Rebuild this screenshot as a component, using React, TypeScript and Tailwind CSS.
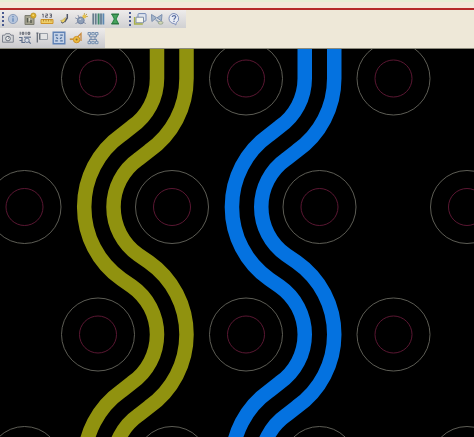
import type { ReactNode } from "react";

const OLIVE = "#90920f";
const BLUE = "#0472e0";

function Tool({ label, children }: { label: string; children: ReactNode }) {
  return (
    <button type="button" aria-label={label} title={label} className="flex h-4 w-4 shrink-0 items-center justify-center">
      <svg viewBox="0 0 14 14" className="h-3.5 w-3.5" fill="none" aria-hidden="true">
        {children}
      </svg>
    </button>
  );
}

function Grip() {
  return <span aria-hidden="true" className="h-3.5 border-l-2 border-dotted border-[#4a5a90]" />;
}

function InfoIcon() {
  return (
    <>
      <circle cx="7" cy="7" r="4.6" fill="#b5c5dc" stroke="#8fa0bd" />
      <path d="M7 6.3v3.4M7 4.1v1.2" stroke="#5c82b6" strokeWidth="1.2" />
    </>
  );
}

function BoardIcon() {
  return (
    <>
      <path d="M2 3.5h9v9H2z" fill="#a3a18d" stroke="#7c7d70" />
      <path d="M4.5 6v4.5M8 8v3" stroke="#565b50" strokeWidth="1.4" />
      <path d="M6.3 6v3" stroke="#e2e0d0" />
      <circle cx="10.4" cy="3.6" r="2.6" fill="#dcae2c" stroke="#b58e22" strokeWidth=".7" />
      <path d="M9.4 3.2h1.6" stroke="#fff0a0" />
    </>
  );
}

function RulerIcon() {
  return (
    <>
      <path d="M2 2.5 3.2 2v3.5M5.5 2h2v1.7h-2v1.6h2.2M9.5 2h2v3.3h-2M10 3.6h1.5" stroke="#5d606e" strokeWidth=".9" />
      <path d="M1 7.5h12v4H1z" fill="#eed06a" stroke="#cf9428" />
      <path d="M3.5 7.5v2M6 7.5v2M8.5 7.5v2M11 7.5v2" stroke="#ad7923" strokeWidth=".8" />
    </>
  );
}

function BrushIcon() {
  return (
    <>
      <path d="M10.3 2v4L7.5 10" stroke="#4f5566" strokeWidth="1.5" />
      <path d="m3.5 8.6 2-.6 3-2.5-.8 4-2 1.5z" fill="#ecd268" stroke="#b79a3a" strokeWidth=".5" />
      <path d="m4 10 2 1.2 2-2" stroke="#5d6068" />
    </>
  );
}

function SparkIcon() {
  return (
    <>
      <circle cx="6.8" cy="8.4" r="3.4" fill="#8f9fb6" stroke="#6f80a0" />
      <path d="M1.2 5.8 3.5 7M3.8 3l1.2 2M1.5 11.5 4 10.4M10 10.6l1.8 1" stroke="#8792a8" />
      <circle cx="10.4" cy="4.4" r="2" fill="#e6c250" />
      <path d="M10.4 1.2v1.4M12.3 4.5h1.4M11.8 3l1.2-1" stroke="#b79a44" />
      <path d="M5.4 7.6 7.2 7" stroke="#dce3ed" />
    </>
  );
}

function LayersIcon() {
  return (
    <>
      <path d="M1 1.5h12.5v11H1z" fill="#c2ccd1" />
      <path d="M2.2 1.5v11M4.8 1.5v11" stroke="#5a6f80" strokeWidth="1.3" />
      <path d="M7.6 1.5v11" stroke="#3e8a68" strokeWidth="1.7" />
      <path d="M10 1.5v11" stroke="#3a5a78" strokeWidth="1.2" />
      <path d="M12.4 1.5v11" stroke="#5c89b4" strokeWidth="1.6" />
    </>
  );
}

function HourglassIcon() {
  return (
    <>
      <path d="M4.2 2.5h6L8 7l2.2 4.5h-6L6.4 7z" fill="#48a35d" stroke="#2f8a4a" strokeWidth="1.2" />
      <path d="M3.4 2.3h7.6M3.4 11.7h7.6" stroke="#2b7a42" strokeWidth="1.4" />
    </>
  );
}

function WindowsIcon() {
  return (
    <>
      <rect x="5" y="1.6" width="8" height="7.6" rx="1" fill="#dfe4ee" stroke="#7288b4" />
      <path d="M3 5.2h7.5v5.6H3z" fill="#f6f5ec" stroke="#7f8fa6" />
      <path d="M1.6 5v7h8.2" stroke="#a8b04a" strokeWidth="1.4" />
    </>
  );
}

function NetworkIcon() {
  return (
    <>
      <path d="m1.5 2.5 5 3.2-4.6 3.8zM12 2.5 7 5.8l4.4 3z" fill="#a9b8cc" stroke="#7c90b0" />
      <path d="m5.5 7.5 3.8 3" stroke="#8fa0b4" strokeWidth="1.4" />
      <ellipse cx="10.6" cy="10.8" rx="2.4" ry="1.4" fill="#d4dab6" stroke="#8f9c88" strokeWidth=".8" />
    </>
  );
}

function HelpIcon() {
  return (
    <>
      <path d="M7 1.5a5 5 0 1 0 0 10l1.8 1.5.4-2.2A5 5 0 0 0 7 1.5Z" fill="#e9ecf4" stroke="#7f8fba" />
      <path d="M5.3 5c0-2 3.6-1.8 3.4 0C8.6 6.3 7 6.1 7 7.7M7 8.8v1.1" stroke="#5a6da2" strokeWidth="1.2" />
    </>
  );
}

function CameraIcon() {
  return (
    <>
      <path d="M1.5 4.2h2.2l1-1.5h4.2l1 1.5h2.4v7H1.5z" fill="#d3d5d8" stroke="#7d828d" />
      <circle cx="7" cy="7.6" r="2.3" fill="#eceded" stroke="#656c79" />
      <path d="m6.8 7.8 1.4-1.3" stroke="#656c79" />
    </>
  );
}

function SignalIcon() {
  return (
    <>
      <path d="M2.2 .8v3M4.2 1.3h1.6v2H4.2zM8 .8v3M10 1.3h1.8v2H10z" stroke="#4d5260" strokeWidth=".9" />
      <path d="M1 6.5h3M1.5 9.5h3M4 6v5.5h3" stroke="#60708c" strokeWidth="1.2" />
      <path d="M6 6.2h7" stroke="#60708c" strokeWidth="1.1" />
      <circle cx="9" cy="9.3" r="2.2" fill="#d9dee6" stroke="#6b7c99" />
      <path d="m10.8 10.8 2 1.8" stroke="#60708c" strokeWidth="1.2" />
    </>
  );
}

function FlagIcon() {
  return (
    <>
      <path d="M4.5 2.5h8v6h-8z" fill="#e3e4e5" stroke="#9aa0a9" />
      <path d="M2.3 2v9.5M4.8 2.5v6M1.4 2.2h2" stroke="#5f6672" strokeWidth="1.2" />
    </>
  );
}

function GridIcon() {
  return (
    <>
      <path d="M1.2 1.2h11.6v11.6H1.2z" fill="#c3d1e6" stroke="#5f82b6" strokeWidth="1.4" />
      <path d="M3.2 4.2h2.6M8.2 4.2h2.6M3.2 9.8h2.6M8.2 9.8h2.6M4.2 6.5 6 7.8M9.8 6.5 8 7.8" stroke="#4c6e9e" strokeWidth="1.3" />
    </>
  );
}

function KeyIcon() {
  return (
    <>
      <path d="m8 6.5 4-4v7.5" stroke="#c98a3c" strokeWidth="1.3" />
      <path d="M.8 8.2h5" stroke="#c9923a" strokeWidth="1.7" />
      <circle cx="7.6" cy="8.6" r="3.2" fill="#eebb3c" stroke="#cc9128" />
      <circle cx="7.6" cy="8.5" r="1" fill="#876d3b" />
    </>
  );
}

function NodesIcon() {
  return (
    <>
      <path d="M2 1.5h2.6v2.4H2zM5.8 1.5h2.4v2.4H5.8zM9.4 1.5H12v2.4H9.4zM2 10.3h2.6v2.4H2zM5.8 10.3h2.4v2.4H5.8zM9.4 10.3H12v2.4H9.4z" fill="#d4e0e8" stroke="#6e88aa" strokeWidth=".9" />
      <path d="M3.5 4v1.8h7V4M3.5 10.2V8.4h7v1.8M5 5.8v2.6M9 5.8v2.6" stroke="#7189ab" />
    </>
  );
}

const vias = [
  [98, 78.5], [246, 78.5], [393.5, 78.5],
  [24.5, 207], [172, 207], [319.5, 207], [467, 207],
  [98, 334.5], [246, 334.5], [393.5, 334.5],
  [24.5, 463], [172, 463], [319.5, 463], [467, 463],
];

function TracePair({ color, shift }: { color: string; shift: number }) {
  return (
    <g transform={`translate(${shift} 0)`} stroke={color} strokeWidth="14.5" fill="none">
      <path d="M157 40V78.5A59 59 0 0 1 131.8 126.8L121.5 134.9A88 88 0 0 0 84.2 207A88 88 0 0 0 121.5 279.1L131.8 286.2A59 59 0 0 1 157 334.5A59 59 0 0 1 131.8 382.8L121.5 390.9A88 88 0 0 0 84.2 463" />
      <path d="M186.5 40V78.5A88.5 88.5 0 0 1 148.8 151L138.4 159.1A58.5 58.5 0 0 0 113.5 207A58.5 58.5 0 0 0 138.4 254.9L148.8 262A88.5 88.5 0 0 1 186.5 334.5A88.5 88.5 0 0 1 148.8 407L138.4 415.1A58.5 58.5 0 0 0 113.5 463" />
    </g>
  );
}

export default function App() {
  return (
    <div className="flex min-h-screen flex-col bg-black">
      <header className="border-b border-[#8b8a7c] bg-[#eee8d8]">
        <div className="h-2 border-t-2 border-[#e7efd5] bg-[#f3e9da]" />
        <div className="h-0.5 bg-[#b52b2b]" />
        <div role="toolbar" aria-label="View and display" className="flex h-[18px] w-fit">
          <div className="flex items-center gap-px bg-linear-to-b from-[#eeeceb] to-[#d0d0d2] pl-0.5 pr-1.5">
            <Grip />
            <Tool label="Information"><InfoIcon /></Tool>
            <Tool label="Board properties"><BoardIcon /></Tool>
            <Tool label="Measure"><RulerIcon /></Tool>
            <Tool label="Highlight"><BrushIcon /></Tool>
            <Tool label="Clear highlight"><SparkIcon /></Tool>
            <Tool label="Layers"><LayersIcon /></Tool>
            <Tool label="Pending task"><HourglassIcon /></Tool>
          </div>
          <div className="flex items-center gap-px bg-linear-to-b from-[#eeeceb] to-[#d0d0d2] pr-1">
            <Grip />
            <Tool label="Windows"><WindowsIcon /></Tool>
            <Tool label="Connections"><NetworkIcon /></Tool>
            <Tool label="Help"><HelpIcon /></Tool>
          </div>
        </div>
        <div role="toolbar" aria-label="Editing" className="flex h-5 w-fit items-center gap-px bg-linear-to-b from-[#eeeceb] to-[#cacacd] pr-1">
          <Tool label="Snapshot"><CameraIcon /></Tool>
          <Tool label="Signals"><SignalIcon /></Tool>
          <Tool label="Flag"><FlagIcon /></Tool>
          <Tool label="Grid"><GridIcon /></Tool>
          <Tool label="Pick net"><KeyIcon /></Tool>
          <Tool label="Nodes"><NodesIcon /></Tool>
        </div>
      </header>
      <main className="flex flex-1 overflow-hidden">
        <svg
          viewBox="0 49 474 388"
          preserveAspectRatio="xMinYMin slice"
          role="img"
          aria-label="Two differential trace pairs routed between vias"
          className="w-full"
        >
          {vias.map(([x, y]) => (
            <g key={`${x}-${y}`} fill="none">
              <circle cx={x} cy={y} r="36.5" stroke="#74746a" strokeWidth="0.8" />
              <circle cx={x} cy={y} r="18.5" stroke="#641a38" strokeWidth="0.9" />
            </g>
          ))}
          <TracePair color={OLIVE} shift={0} />
          <TracePair color={BLUE} shift={147.75} />
        </svg>
      </main>
    </div>
  );
}
